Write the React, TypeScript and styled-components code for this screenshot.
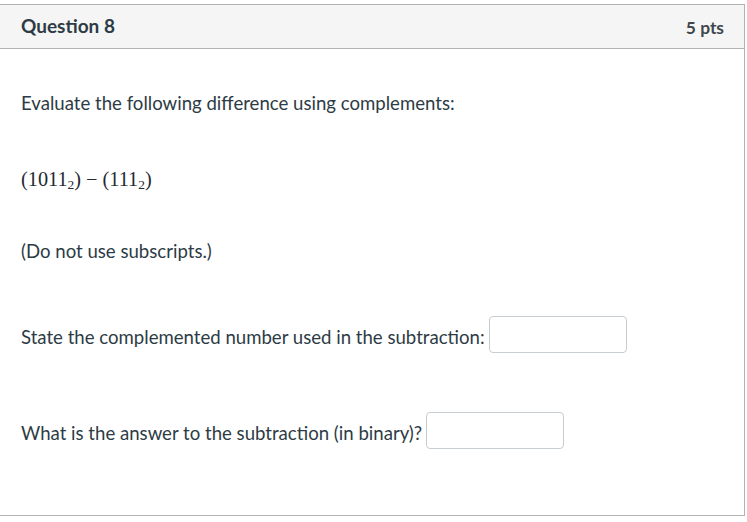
import React from "react";
import styled, { createGlobalStyle } from "styled-components";

const Global = createGlobalStyle`
  html, body { margin: 0; padding: 0; background: #fff; }
  body { font-family: Lato, "Liberation Sans", sans-serif; color: #2d3b45; }
`;

const Card = styled.div`
  margin: 4px 2px 0 -1px;
  border: 1px solid #b0b3b5;
  background: #fff;
`;

const Header = styled.div`
  display: flex;
  align-items: center;
  justify-content: space-between;
  height: 43px;
  padding: 0 20px 0 21px;
  background: #f5f5f5;
  border-bottom: 1px solid #b0b3b5;
`;

const Title = styled.div`
  font-size: 19px;
  font-weight: 700;
  color: #2d3b45;
  padding-bottom: 3px;
`;

const Points = styled.div`
  font-size: 17.4px;
  font-weight: 700;
  color: #3f474d;
  padding-top: 1px;
`;

const Body = styled.div`
  padding: 42px 0 66px 21px;
  display: flex;
  flex-direction: column;
`;

const Para = styled.p<{ $top?: number }>`
  margin: ${(p) => p.$top ?? 0}px 0 0;
  font-size: 18.6px;
  line-height: 24px;
`;

const MathLine = styled.p<{ $top?: number }>`
  margin: ${(p) => p.$top ?? 0}px 0 0;
  font-family: "Liberation Serif", "DejaVu Serif", serif;
  font-size: 20.3px;
  line-height: 24px;
  color: #1f2a33;
  sub {
    font-size: 13.5px;
    line-height: 0;
    vertical-align: -3px;
  }
`;

const Minus = styled.span`
  margin: 0 5px;
`;

const Row = styled.div<{ $top?: number }>`
  margin-top: ${(p) => p.$top ?? 0}px;
  display: flex;
  align-items: center;
  font-size: 18.6px;
  line-height: 24px;
`;

const Label = styled.span`
  padding-top: 5px;
  margin-right: 4px;
`;

const Field = styled.input`
  box-sizing: border-box;
  width: 138px;
  height: 37px;
  border: 1px solid #c7cdd1;
  border-radius: 4px;
  background: #fff;
  font-family: inherit;
  font-size: 16px;
  padding: 0 8px;
  outline: none;
`;

export default function App() {
  return (
    <>
      <Global />
      <Card>
        <Header>
          <Title>Question 8</Title>
          <Points>5 pts</Points>
        </Header>
        <Body>
          <Para>Evaluate the following difference using complements:</Para>
          <MathLine $top={52}>
            (1011<sub>2</sub>)<Minus>−</Minus>(111<sub>2</sub>)
          </MathLine>
          <Para $top={48}>(Do not use subscripts.)</Para>
          <Row $top={53}>
            <Label>State the complemented number used in the subtraction:</Label>
            <Field type="text" />
          </Row>
          <Row $top={59}>
            <Label>What is the answer to the subtraction (in binary)?</Label>
            <Field type="text" />
          </Row>
        </Body>
      </Card>
    </>
  );
}
